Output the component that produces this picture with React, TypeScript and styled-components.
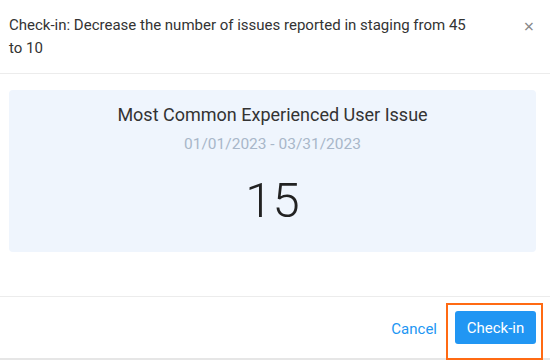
import React from 'react'
import styled, { createGlobalStyle } from 'styled-components'

const GlobalStyle = createGlobalStyle`
  html, body {
    margin: 0;
    padding: 0;
    background: #ffffff;
  }
  body {
    font-family: Roboto, 'Noto Sans', sans-serif;
    color: #333;
  }
`

const Modal = styled.div`
  width: 550px;
  height: 360px;
  box-sizing: border-box;
  display: flex;
  flex-direction: column;
  background: #fff;
  border-bottom: 2px solid #e6e6e6;
`

const Header = styled.header`
  display: flex;
  align-items: flex-start;
  justify-content: space-between;
  padding: 14px 16px 13px 9px;
  border-bottom: 1px solid #ececec;
`

const Title = styled.h2`
  margin: 0;
  max-width: 462px;
  font-size: 15px;
  font-weight: 400;
  line-height: 23px;
  color: #333;
`

const Close = styled.button`
  border: 0;
  background: none;
  padding: 0;
  margin-top: 2px;
  font-family: 'Noto Sans', sans-serif;
  font-size: 18px;
  line-height: 20px;
  color: #888;
  cursor: pointer;
`

const Body = styled.div`
  flex: 1;
  padding: 16px 14px 0 9px;
`

const Card = styled.section`
  height: 162px;
  box-sizing: border-box;
  border-radius: 4px;
  background: #eff5fd;
  display: flex;
  flex-direction: column;
  align-items: center;
  padding-top: 14px;
`

const CardTitle = styled.div`
  font-size: 18px;
  line-height: 22px;
  color: #333;
`

const DateRange = styled.div`
  margin-top: 8px;
  font-size: 15.5px;
  line-height: 20px;
  color: #a8b7c9;
`

const Value = styled.div`
  margin-top: 17px;
  font-size: 49px;
  font-weight: 300;
  line-height: 60px;
  color: #222;
`

const Footer = styled.footer`
  height: 62px;
  box-sizing: border-box;
  border-top: 1px solid #ececec;
  display: flex;
  align-items: flex-start;
  justify-content: flex-end;
  padding: 6px 7px 0 0;
`

const LinkButton = styled.button`
  border: 0;
  background: none;
  margin-top: 17px;
  padding: 0 9px 0 0;
  font-family: inherit;
  font-size: 15px;
  line-height: 18px;
  color: #2196f3;
  cursor: pointer;
`

const Highlight = styled.div`
  border: 2px solid #ff6a13;
  padding: 6px 5px 14px 7px;
`

const PrimaryButton = styled.button`
  width: 81px;
  height: 33px;
  border: 0;
  border-radius: 3px;
  background: #2196f3;
  color: #fff;
  font-family: inherit;
  font-size: 15px;
  cursor: pointer;
`

export default function App() {
  return (
    <>
      <GlobalStyle />
      <Modal>
        <Header>
          <Title>Check-in: Decrease the number of issues reported in staging from 45 to 10</Title>
          <Close type="button" aria-label="Close">
            ×
          </Close>
        </Header>
        <Body>
          <Card>
            <CardTitle>Most Common Experienced User Issue</CardTitle>
            <DateRange>01/01/2023 - 03/31/2023</DateRange>
            <Value>15</Value>
          </Card>
        </Body>
        <Footer>
          <LinkButton type="button">Cancel</LinkButton>
          <Highlight>
            <PrimaryButton type="button">Check-in</PrimaryButton>
          </Highlight>
        </Footer>
      </Modal>
    </>
  )
}
